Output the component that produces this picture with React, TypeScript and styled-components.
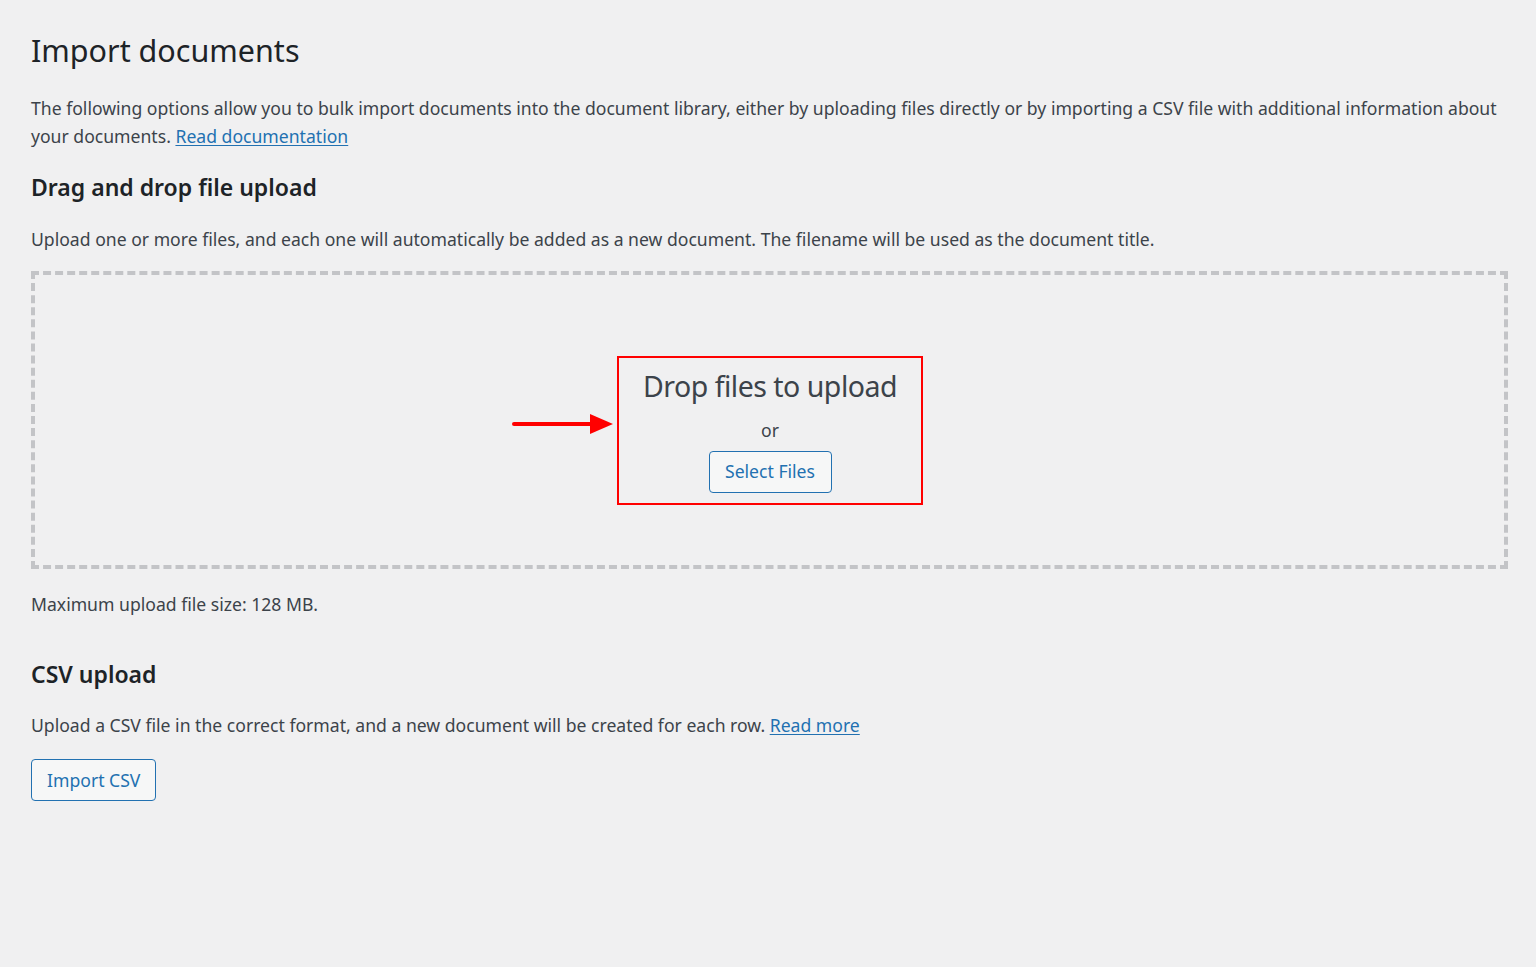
import React from "react";
import styled, { createGlobalStyle } from "styled-components";

const Global = createGlobalStyle`
  html, body { margin: 0; padding: 0; background: #f0f0f1; }
  body {
    font-family: "Noto Sans", "Open Sans", sans-serif;
    color: #3c434a;
    font-size: 17.6px;
    line-height: 1.6;
  }
`;

const Page = styled.div`
  padding: 31px 28px 40px 31px;
  min-height: 967px;
  box-sizing: border-box;
`;

const Title = styled.h1`
  margin: 0 0 23px;
  font-size: 30.5px;
  font-weight: 400;
  line-height: 1.3;
  color: #1d2327;
`;

const Para = styled.p<{ $mb?: number }>`
  margin: 0 0 ${(p) => p.$mb ?? 17}px;
  line-height: 28px;
`;

const Link = styled.a`
  color: #2271b1;
  text-decoration: underline;
  text-underline-offset: 2px;
`;

const Heading = styled.h2`
  margin: 0 0 22px;
  font-size: 23px;
  font-weight: 600;
  line-height: 1.3;
  color: #1d2327;
`;

const DropZone = styled.div`
  border: 4px dashed #c3c4c7;
  height: 298px;
  box-sizing: border-box;
  display: flex;
  align-items: center;
  justify-content: center;
  margin-top: 18px;
`;

const Highlight = styled.div`
  position: relative;
  border: 2px solid #f00;
  width: 306px;
  box-sizing: border-box;
  padding: 10px 0 10px;
  display: flex;
  flex-direction: column;
  align-items: center;
  margin-left: 1px;
  margin-top: 21px;
`;

const DropTitle = styled.div`
  font-size: 28.5px;
  line-height: 36px;
  color: #3c434a;
  letter-spacing: -0.5px;
`;

const Or = styled.div`
  margin-top: 13px;
  line-height: 26px;
`;

const Button = styled.button`
  font-family: inherit;
  font-size: 17.6px;
  line-height: 1;
  color: #2271b1;
  background: #f6f7f7;
  border: 1px solid #2271b1;
  border-radius: 4px;
  padding: 0 15px;
  height: 42px;
  cursor: pointer;
`;

const SelectButton = styled(Button)`
  margin-top: 8px;
  width: 123px;
`;

const Arrow = styled.svg`
  position: absolute;
  left: -107px;
  top: 54px;
`;

const Note = styled.p`
  margin: 21px 0 42px;
  line-height: 28px;
`;

export default function App() {
  return (
    <>
      <Global />
      <Page>
        <Title>Import documents</Title>
        <Para $mb={23}>
          The following options allow you to bulk import documents into the document library, either by uploading files
          directly or by importing a CSV file with additional information about your documents.{" "}
          <Link href="#">Read documentation</Link>
        </Para>
        <Heading>Drag and drop file upload</Heading>
        <Para $mb={0}>
          Upload one or more files, and each one will automatically be added as a new document. The filename will be used
          as the document title.
        </Para>
        <DropZone>
          <Highlight>
            <Arrow width="104" height="24" viewBox="0 0 104 24">
              <line x1="2" y1="12" x2="80" y2="12" stroke="#f00" strokeWidth="4" strokeLinecap="round" />
              <polygon points="78,2 101,12 78,22" fill="#f00" />
            </Arrow>
            <DropTitle>Drop files to upload</DropTitle>
            <Or>or</Or>
            <SelectButton>Select Files</SelectButton>
          </Highlight>
        </DropZone>
        <Note>Maximum upload file size: 128 MB.</Note>
        <Heading>CSV upload</Heading>
        <Para $mb={20}>
          Upload a CSV file in the correct format, and a new document will be created for each row.{" "}
          <Link href="#">Read more</Link>
        </Para>
        <Button>Import CSV</Button>
      </Page>
    </>
  );
}
